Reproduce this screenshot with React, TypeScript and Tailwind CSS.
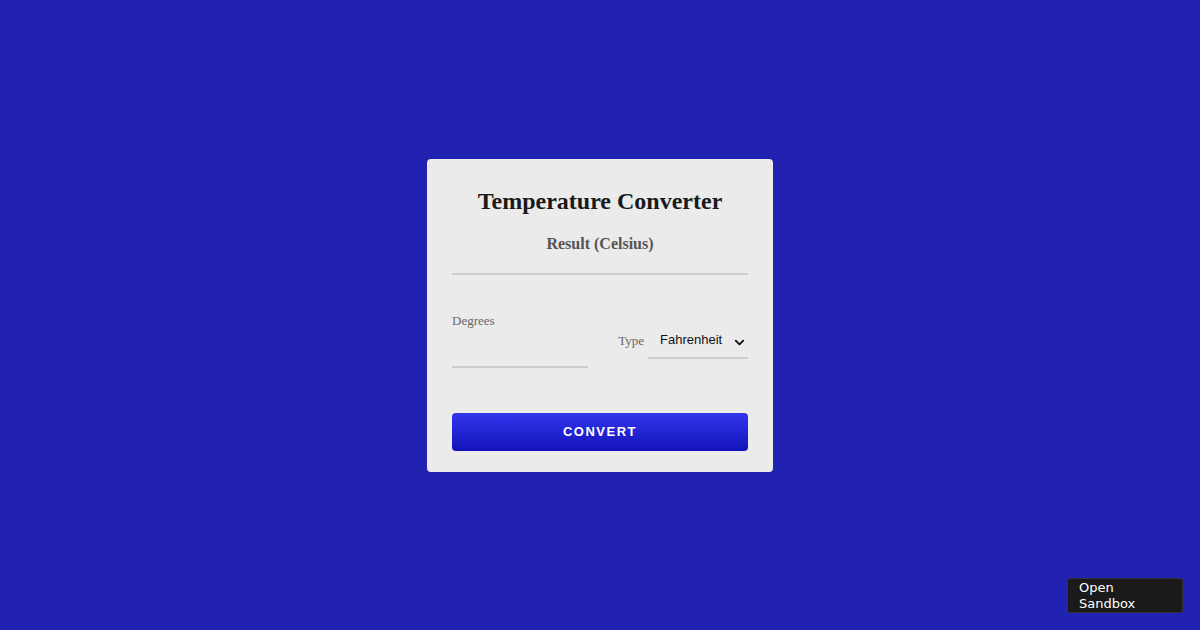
import { useState } from 'react';
import { ChevronDown } from 'lucide-react';

const serif = "font-['Liberation_Serif','Times_New_Roman',serif]";
const sans = "font-['Liberation_Sans',Arial,sans-serif]";

export default function App() {
  const [degrees, setDegrees] = useState('');
  const [type, setType] = useState('fahrenheit');
  const [result, setResult] = useState<string | null>(null);

  const convert = () => {
    const value = parseFloat(degrees);
    if (Number.isNaN(value)) return setResult('');
    const out = type === 'fahrenheit' ? ((value - 32) * 5) / 9 : (value * 9) / 5 + 32;
    setResult(out.toFixed(1));
  };

  return (
    <div className="relative flex h-[630px] w-full items-center justify-center bg-[#2222b0]">
      <div className={`w-[346px] rounded-[4px] bg-[#ebebeb] px-[25px] pb-[21px] pt-[28px] ${serif}`}>
        <h1 className="text-center text-[24px] font-bold leading-[28px] text-[#1a1a1a]">Temperature Converter</h1>
        <h2 className="mt-[19px] text-center text-[16px] font-bold leading-[19px] text-[#555]">
          Result ({type === 'fahrenheit' ? 'Celsius' : 'Fahrenheit'})
        </h2>
        <div className="mt-[20px] h-[2px] bg-[#cccccc] text-center">{result}</div>

        <div className="mt-[38px] flex items-end justify-between">
          <label className="flex w-[136px] flex-col">
            <span className="text-[13px] leading-[16px] text-[#666]">Degrees</span>
            <input
              value={degrees}
              onChange={(e) => setDegrees(e.target.value)}
              className="h-[39px] w-full border-b-2 border-[#cccccc] bg-transparent text-[14px] outline-none"
            />
          </label>
          <div className="mb-[9px] flex items-center gap-[4px]">
            <span className="text-[13px] leading-[16px] text-[#666]">Type</span>
            <div className="relative w-[100px]">
              <select
                value={type}
                onChange={(e) => setType(e.target.value)}
                className={`block h-[35px] w-full appearance-none border-b-2 border-[#cccccc] bg-transparent pl-[12px] text-[13px] text-[#111] outline-none ${sans}`}
              >
                <option value="fahrenheit">Fahrenheit</option>
                <option value="celsius">Celsius</option>
              </select>
              <ChevronDown size={15} strokeWidth={3} className="pointer-events-none absolute right-[1px] top-[11px] text-[#111]" />
            </div>
          </div>
        </div>

        <button
          onClick={convert}
          className={`mt-[45px] h-[38px] w-full rounded-[4px] bg-gradient-to-b from-[#3434ee] to-[#1212b8] text-[13px] font-bold tracking-[1.5px] text-white ${sans}`}
        >
          CONVERT
        </button>
      </div>

      <div className="absolute left-[1067px] top-[578px] w-[116px] rounded-[3px] border border-[#333] bg-[#1a1a1a] px-[11px] pt-[1px] font-['DejaVu_Sans',sans-serif] text-[13px] leading-[16px] text-white">
        Open Sandbox
      </div>
    </div>
  );
}
